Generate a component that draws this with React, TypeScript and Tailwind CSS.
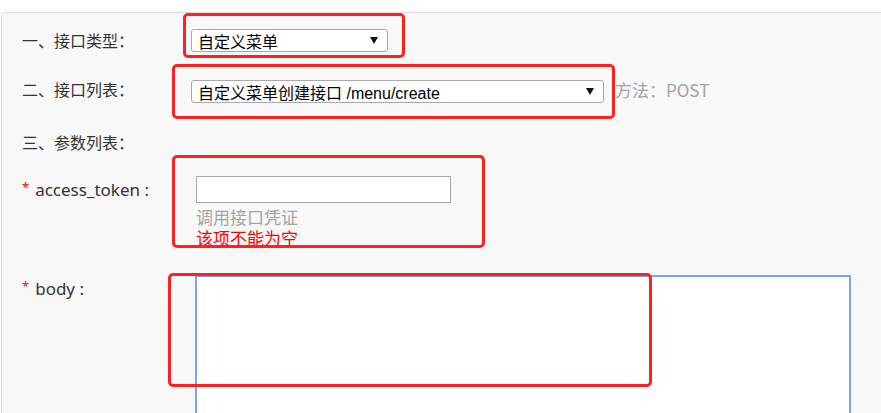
import React from "react";

function Arrow() {
  return (
    <svg width="8" height="7" viewBox="0 0 8 7" className="shrink-0">
      <path d="M0 0 H8 L4 7 Z" fill="#111" />
    </svg>
  );
}

function FakeSelect({ width, text }: { width: string; text: string }) {
  return (
    <div
      className={`${width} h-[23px] bg-white border border-[#a9a9a9] rounded-[3px] flex items-center justify-between pl-[6px] pr-[9px] font-['Liberation_Sans','Noto_Sans_CJK_SC',sans-serif] text-[16px] text-black leading-none`}
    >
      <span className="pt-[4px] whitespace-nowrap">{text}</span>
      <Arrow />
    </div>
  );
}

function Mark({ className }: { className: string }) {
  return (
    <div
      className={`absolute border-[3px] border-[#ff2020] rounded-[5px] pointer-events-none ${className}`}
    />
  );
}

export default function App() {
  const label =
    "w-[189px] shrink-0 pl-[20px] text-[16px] text-[#333] font-['Noto_Sans','Noto_Sans_CJK_SC',sans-serif] whitespace-nowrap";
  const tip =
    "h-[21px] leading-[21px] text-[17px] font-['Liberation_Sans','Noto_Sans_CJK_SC',sans-serif] whitespace-nowrap";
  return (
    <div className="relative w-[881px] h-[413px] overflow-hidden bg-white">
      <div className="mt-[12px] ml-[1px] w-[920px] h-[460px] border border-[#dcdcdc] rounded-[4px] bg-[#f8f8f8] pt-[16px]">
        {/* Row 1 */}
        <div className="flex items-center h-[23px]">
          <div className={label}>一、接口类型：</div>
          <FakeSelect width="w-[197px]" text="自定义菜单" />
        </div>
        {/* Row 2 */}
        <div className="flex items-center h-[23px] mt-[28px]">
          <div className={`${label} -mt-[3px]`}>二、接口列表：</div>
          <FakeSelect width="w-[413px]" text="自定义菜单创建接口 /menu/create" />
          <span className="ml-[11px] text-[17px] text-[#a3a3a3] font-['Noto_Sans_CJK_SC',sans-serif] -mt-[3px] whitespace-nowrap">
            方法：POST
          </span>
        </div>
        {/* Row 3 */}
        <div className="flex mt-[28px] h-[24px] items-center">
          <div className={label}>三、参数列表：</div>
        </div>
        {/* Row 4 */}
        <div className="flex items-start mt-[21px]">
          <div className={`${label} h-[27px] flex items-center`}>
            <span className="text-[#ff0000] text-[13px] mr-[6px] -mt-[4px]">*</span>
            <span className="text-[17px]">access_token :</span>
          </div>
          <div className="ml-[5px] flex flex-col">
            <input
              type="text"
              className="w-[255px] h-[27px] bg-white border border-[#a9a9a9] outline-none"
            />
            <div className={`mt-[5px] text-[#a3a3a3] ${tip}`}>调用接口凭证</div>
            <div className={`text-[#ff0000] ${tip}`}>该项不能为空</div>
          </div>
        </div>
        {/* Row 5 */}
        <div className="flex items-start mt-[25px]">
          <div className={`${label} h-[24px] mt-[2px] flex items-center`}>
            <span className="text-[#ff0000] text-[13px] mr-[6px] -mt-[4px]">*</span>
            <span className="text-[17px]">body :</span>
          </div>
          <textarea className="ml-[4px] w-[656px] h-[170px] bg-white border-2 border-[#7ba5ef] outline-none resize-none" />
        </div>
      </div>

      <Mark className="left-[183px] top-[13px] w-[222px] h-[45px]" />
      <Mark className="left-[172px] top-[64px] w-[443px] h-[55px]" />
      <Mark className="left-[172px] top-[155px] w-[313px] h-[93px]" />
      <Mark className="left-[168px] top-[273px] w-[484px] h-[114px]" />
    </div>
  );
}
